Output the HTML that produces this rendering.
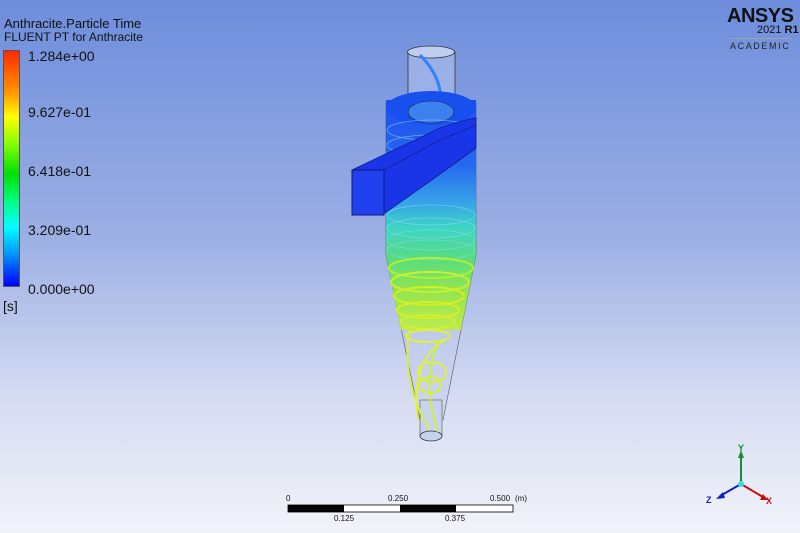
<!DOCTYPE html>
<html><head><style>
body{margin:0;width:800px;height:533px;overflow:hidden;background:linear-gradient(#6d8ddc 0%,#9db0e4 45%,#d6dcf2 75%,#f1f3f9 100%);font-family:"Liberation Sans",sans-serif;position:relative}
.t{position:absolute;color:#111;white-space:nowrap}
</style></head><body>
<div class="t" style="left:4px;top:16px;font-size:13px">Anthracite.Particle Time</div>
<div class="t" style="left:4px;top:30px;font-size:12px">FLUENT PT for Anthracite</div>
<div style="position:absolute;left:3px;top:50px;width:17px;height:237px;background:linear-gradient(#ff2a00,#ff9900 18%,#ffff00 28%,#80ff00 40%,#00e000 52%,#00ff90 65%,#00ffff 75%,#0090ff 87%,#0000ff);border:1px solid #555;box-sizing:border-box"></div>
<div class="t" style="left:28px;top:48px;font-size:14px">1.284e+00</div>
<div class="t" style="left:28px;top:104px;font-size:14px">9.627e-01</div>
<div class="t" style="left:28px;top:163px;font-size:14px">6.418e-01</div>
<div class="t" style="left:28px;top:222px;font-size:14px">3.209e-01</div>
<div class="t" style="left:28px;top:281px;font-size:14px">0.000e+00</div>
<div class="t" style="left:3px;top:298px;font-size:14px">[s]</div>
<div class="t" style="left:727px;top:5px;font-size:20px;font-weight:bold;color:#111;letter-spacing:-0.5px">ANSYS</div>
<div class="t" style="left:757px;top:24px;font-size:11px;color:#111">2021 <b>R1</b></div>
<div style="position:absolute;left:730px;top:38px;width:62px;height:1px;background:#9aa"></div>
<div class="t" style="left:730px;top:41px;font-size:9px;letter-spacing:1.6px;color:#222">ACADEMIC</div>
<svg width="800" height="533" style="position:absolute;left:0;top:0">
<defs>
<linearGradient id="g" x1="0" y1="90" x2="0" y2="340" gradientUnits="userSpaceOnUse">
<stop offset="0" stop-color="#1040f0"/><stop offset="0.3" stop-color="#1860f0"/><stop offset="0.45" stop-color="#2aa0e8"/><stop offset="0.55" stop-color="#30d8c0"/><stop offset="0.68" stop-color="#50e070"/><stop offset="0.8" stop-color="#90e840"/><stop offset="1" stop-color="#c8f040"/></linearGradient>
<clipPath id="c"><path d="M386 100 L476 100 L476 255 L461 330 L401 330 L386 255Z"/></clipPath>
</defs>
<rect x="408" y="52" width="47" height="50" fill="#b8c8ee" fill-opacity="0.5" stroke="#333" stroke-width="0.8"/>
<ellipse cx="431" cy="52" rx="23.5" ry="6" fill="#c0cdf0" stroke="#333" stroke-width="0.8"/>
<path d="M420 55 Q445 80 440 110" stroke="#3080ff" stroke-width="3" fill="none"/>
<path d="M386 103 L476 103 L476 255 L443 420 L420 420 L386 255 Z" fill="#c0cbec" fill-opacity="0.45" stroke="#555" stroke-width="0.6"/>
<rect x="420" y="400" width="22" height="36" fill="#c8d2ef" stroke="#555" stroke-width="0.6"/>
<ellipse cx="431" cy="436" rx="11" ry="5" fill="#c8d2ef" stroke="#333" stroke-width="0.8"/>
<rect x="386" y="100" width="90" height="240" fill="url(#g)" opacity="0.9" clip-path="url(#c)"/>
<ellipse cx="431" cy="108" rx="45" ry="17" fill="#1850f0"/>
<ellipse cx="431" cy="112" rx="23" ry="11" fill="#3c80f0" stroke="#222" stroke-width="0.6"/>
<g fill="none" stroke="#90d8ff" stroke-width="0.8" opacity="0.6">
<ellipse cx="431" cy="215" rx="44" ry="10"/><ellipse cx="431" cy="228" rx="44" ry="10"/><ellipse cx="431" cy="240" rx="44" ry="10"/><ellipse cx="431" cy="250" rx="44" ry="10"/><ellipse cx="431" cy="130" rx="44" ry="10"/><ellipse cx="431" cy="145" rx="44" ry="10"/>
</g>
<g fill="none" stroke-width="2">
<ellipse cx="431" cy="268" rx="42" ry="10" stroke="#b0f030"/>
<ellipse cx="430" cy="282" rx="39" ry="10" stroke="#c8f030"/>
<ellipse cx="429" cy="296" rx="35" ry="9" stroke="#d0f020"/>
<ellipse cx="428" cy="310" rx="31" ry="8" stroke="#d8f020"/>
<ellipse cx="428" cy="322" rx="27" ry="7" stroke="#d0f030"/>
<ellipse cx="428" cy="336" rx="22" ry="6" stroke="#e0f040"/>
<ellipse cx="432" cy="372" rx="14" ry="10" stroke="#e0f040"/>
<ellipse cx="430" cy="385" rx="11" ry="8" stroke="#d8f040"/>
<path d="M410 330 Q400 380 430 430" stroke="#d8f040"/>
<path d="M440 340 Q420 380 438 432" stroke="#c8f040"/>
<path d="M445 340 Q410 360 418 420" stroke="#e0f040"/>
</g>
<path d="M352 170 L440 128 Q470 118 476 118 L476 148 Q460 160 385 213 L352 215 Z" fill="#1a35e8" stroke="#102090" stroke-width="0.8"/>
<rect x="352" y="170" width="32" height="45" fill="#2040ee" stroke="#101880" stroke-width="1"/>
<path d="M384 170 L440 140 Q470 128 476 125" stroke="#102090" stroke-width="0.8" fill="none"/>
<rect x="288" y="505" width="225" height="7" fill="#fff" stroke="#000" stroke-width="0.8"/>
<rect x="288" y="505" width="56" height="7" fill="#000"/>
<rect x="400" y="505" width="56" height="7" fill="#000"/>
<g font-family="Liberation Sans" font-size="8" fill="#111">
<text x="286" y="501">0</text><text x="388" y="501">0.250</text><text x="490" y="501">0.500</text><text x="515" y="501">(m)</text>
<text x="334" y="521">0.125</text><text x="445" y="521">0.375</text>
</g>
<line x1="741" y1="484" x2="741" y2="455" stroke="#109030" stroke-width="2"/>
<path d="M738 458 L741 450 L744 458Z" fill="#109030"/>
<line x1="741" y1="484" x2="763" y2="497" stroke="#c01010" stroke-width="2"/>
<path d="M760 500 L768 500 L763 494Z" fill="#c01010"/>
<line x1="741" y1="484" x2="720" y2="496" stroke="#1020c0" stroke-width="2"/>
<path d="M716 499 L723 492 L725 498Z" fill="#1020c0"/>
<circle cx="741" cy="484" r="3" fill="#30e0e0"/>
<g font-family="Liberation Sans" font-size="9" font-weight="bold">
<text x="738" y="451" fill="#109030">Y</text><text x="766" y="504" fill="#c01010">X</text><text x="706" y="503" fill="#1020c0">Z</text>
</g>
</svg>
</body></html>
